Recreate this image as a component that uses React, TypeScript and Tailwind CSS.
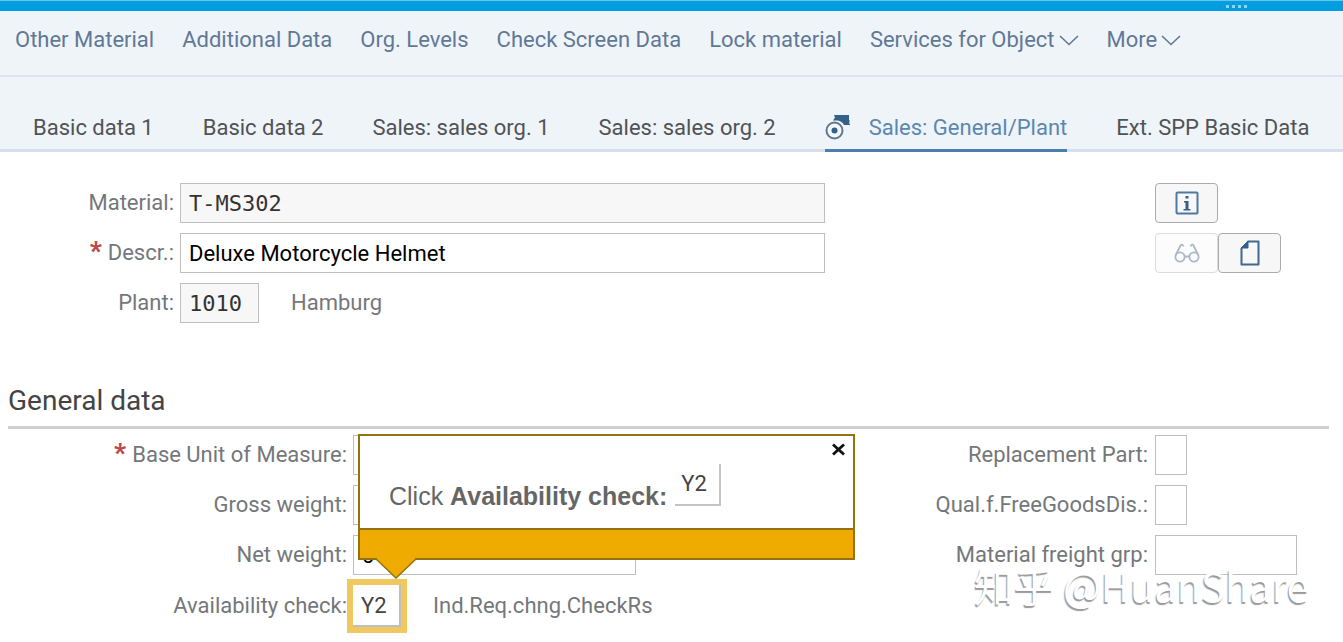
import React, { useState } from 'react';

type MenuItem = { label: string; dropdown?: boolean };

const menuItems: MenuItem[] = [
    { label: 'Other Material' },
    { label: 'Additional Data' },
    { label: 'Org. Levels' },
    { label: 'Check Screen Data' },
    { label: 'Lock material' },
    { label: 'Services for Object', dropdown: true },
    { label: 'More', dropdown: true },
];

const tabs = [
    'Basic data 1',
    'Basic data 2',
    'Sales: sales org. 1',
    'Sales: sales org. 2',
    'Sales: General/Plant',
    'Ext. SPP Basic Data',
];

const inputBase = 'h-10 border border-[#bfbfbf] px-2 text-[22px] outline-none';
const mono = "font-['DejaVu_Sans_Mono',monospace]";
const iconButton = 'flex h-10 w-[63px] items-center justify-center rounded-[4px] border border-[#ababab] bg-[#f7f7f7]';

const ChevronIcon = () => (
    <svg width="20" height="12" viewBox="0 0 20 12" fill="none" stroke="#617896" strokeWidth="1.6">
        <path d="M1 2L10 10.500L19 2" />
    </svg>
);

const TabIcon = () => (
    <svg width="26" height="26" viewBox="0 0 26 26" fill="none">
        <path d="M9 1H24V6L25 7L24 8L25 11H19C18 9 16 7 13 6.500L8 6.500L10 3.500Z" fill="#346187" />
        <circle cx="9.500" cy="16.500" r="8" stroke="#5f7890" strokeWidth="2" fill="#f4f8fb" />
        <circle cx="9.500" cy="16.500" r="3" fill="#346187" />
    </svg>
);

const InfoIcon = () => (
    <svg width="24" height="24" viewBox="0 0 24 24" fill="none">
        <rect x="1.500" y="1.500" width="21" height="21" rx="1" stroke="#4f7a9e" strokeWidth="2" />
        <path d="M10.500 5H13.500V7.500H10.500ZM9 10H13.500V18H15.500V19.500H8.500V18H10.500V11.500H9Z" fill="#346187" />
    </svg>
);

const GlassesIcon = () => (
    <svg width="26" height="20" viewBox="0 0 26 20" fill="none" stroke="#a9b9c8" strokeWidth="1.800">
        <circle cx="6" cy="14" r="4.600" />
        <circle cx="20" cy="14" r="4.600" />
        <path d="M10.500 13.500H15.500M1.800 12L6.500 2.500C7.200 1.300 8.600 1.300 9.500 3.500M24.200 12L19.500 2.500C18.800 1.300 17.400 1.300 16.500 3.500" />
    </svg>
);

const PageIcon = () => (
    <svg width="20" height="26" viewBox="0 0 20 26" fill="none">
        <path d="M7.500 1.500H18.500V24.500H1.500V8" stroke="#41698d" strokeWidth="2" strokeLinejoin="round" />
        <path d="M8 1V8H1Z" fill="#346187" stroke="#346187" strokeLinejoin="round" />
    </svg>
);

type LabelProps = { htmlFor: string; required?: boolean; className?: string; children: React.ReactNode };

const FieldLabel = ({ htmlFor, required, className, children }: LabelProps) => (
    <label htmlFor={htmlFor} className={`shrink-0 whitespace-nowrap text-right text-[#74777a] ${className ?? ''}`}>
        {required && <span className="mr-[6px] text-[26px] leading-5 font-black text-[#bb4a4a]">*</span>}
        {children}
    </label>
);

const Callout = ({ onClose }: { onClose: () => void }) => (
    <div className="absolute -top-px left-[358px] w-[497px] border-2 border-[#94720f] bg-white font-['Liberation_Sans',Arial,sans-serif]">
        <button
            type="button"
            aria-label="Close"
            onClick={onClose}
            className="absolute top-[7px] right-2 p-0"
        >
            <svg width="13" height="13" viewBox="0 0 13 13" stroke="#111" strokeWidth="2.800">
                <path d="M1 1.500L12 11.500M12 1.500L1 11.500" />
            </svg>
        </button>
        <div className="flex h-[92px] items-start pt-7 pl-[29px]">
            <p className="pt-4 text-[25px] leading-8 whitespace-nowrap text-[#666]">
                Click <strong>Availability check:</strong>
            </p>
            <span className="ml-2 flex h-[42px] w-[46px] items-center border-r-2 border-b-2 border-[#c4c4c4] pl-[6px] font-[Roboto,sans-serif] text-[22px] text-[#444]">
                Y2
            </span>
        </div>
        <div className="h-[30px] border-t-2 border-[#94720f] bg-[#f0ab00]" />
        <svg className="absolute top-[122px] left-4" width="40" height="21" viewBox="0 0 40 21">
            <path d="M1 0V2L20 20L39 2V0Z" fill="#f0ab00" />
            <path d="M0 1L20 20L40 1" fill="none" stroke="#94720f" strokeWidth="1.500" />
        </svg>
    </div>
);

const App: React.FC = () => {
    const [activeTab, setActiveTab] = useState('Sales: General/Plant');
    const [showCallout, setShowCallout] = useState(true);
    const [description, setDescription] = useState('Deluxe Motorcycle Helmet');

    return (
        <div className="relative min-h-screen overflow-hidden bg-white font-[Roboto,sans-serif] text-[22px] leading-7">
            {/* Shell bar */}
            <div className="flex h-[11px] justify-end gap-[3px] border-t border-[#6cc4ea] bg-[#009de0] pt-1 pr-24">
                {[0, 1, 2, 3].map((dot) => (
                    <span key={dot} className="size-[3px] bg-[#8fd3f2]" />
                ))}
            </div>

            <header className="bg-[#eff4f9]">
                <nav className="flex h-[66px] gap-7 border-b-2 border-[#dce5ef] pt-[15px] pl-[15px]">
                    {menuItems.map((item) => (
                        <button key={item.label} type="button" className="flex h-7 items-center gap-1 whitespace-nowrap text-[#617896]">
                            {item.label}
                            {item.dropdown && <ChevronIcon />}
                        </button>
                    ))}
                </nav>

                <div role="tablist" className="flex h-[75px] items-stretch gap-[49px] border-b-[3px] border-[#d5e0eb] pl-[33px]">
                    {tabs.map((tab) => (
                        <button
                            key={tab}
                            type="button"
                            role="tab"
                            aria-selected={activeTab === tab}
                            onClick={() => setActiveTab(tab)}
                            className={`-mb-[3px] flex items-start border-b-[3px] pt-[37px] whitespace-nowrap ${activeTab === tab ? 'border-[#4a7fad] text-[#5b88b0]' : 'border-transparent text-[#505356]'}`}
                        >
                            {tab === 'Sales: General/Plant' && <span className="mr-[18px]"><TabIcon /></span>}
                            {tab}
                        </button>
                    ))}
                </div>
            </header>

            <main>
                {/* Material header */}
                <div className="flex flex-col gap-[10px] pt-[31px]">
                    <div className="flex items-center">
                        <FieldLabel htmlFor="material" className="mr-[6px] w-[174px]">Material:</FieldLabel>
                        <input id="material" readOnly value="T-MS302" className={`${inputBase} ${mono} w-[48%] bg-[#f7f7f7] text-[#333]`} />
                        <div className="ml-auto w-[188px]">
                            <button type="button" aria-label="Information" className={iconButton}><InfoIcon /></button>
                        </div>
                    </div>
                    <div className="flex items-center">
                        <FieldLabel htmlFor="descr" required className="mr-[6px] w-[174px]">Descr.:</FieldLabel>
                        <input id="descr" value={description} onChange={(e) => setDescription(e.target.value)} className={`${inputBase} w-[48%] bg-white text-black`} />
                        <div className="ml-auto flex w-[188px]">
                            <button type="button" disabled aria-label="Display" className="flex h-10 w-[63px] items-center justify-center rounded-[4px] border border-[#dcdcdc] bg-[#fcfcfc]"><GlassesIcon /></button>
                            <button type="button" aria-label="Create" className={iconButton}><PageIcon /></button>
                        </div>
                    </div>
                    <div className="flex items-center">
                        <FieldLabel htmlFor="plant" className="mr-[6px] w-[174px]">Plant:</FieldLabel>
                        <input id="plant" readOnly value="1010" className={`${inputBase} ${mono} w-[79px] bg-[#f7f7f7] text-[#333]`} />
                        <span className="ml-8 text-[#74777a]">Hamburg</span>
                    </div>
                </div>

                {/* General data */}
                <h2 className="mt-[61px] mr-[14px] ml-2 border-b-[3px] border-[#cfcfcf] pb-2 text-[28px] leading-[34px] text-[#444]">General data</h2>

                <div className="relative mt-[6px] flex justify-between">
                    <div className="flex flex-col gap-[10px]">
                        <div className="flex items-center">
                            <FieldLabel htmlFor="unit" required className="mr-[6px] w-[347px]">Base Unit of Measure:</FieldLabel>
                            <input id="unit" className={`${inputBase} w-20`} />
                        </div>
                        <div className="flex items-center">
                            <FieldLabel htmlFor="gross" className="mr-[6px] w-[347px]">Gross weight:</FieldLabel>
                            <input id="gross" className={`${inputBase} w-[283px]`} />
                        </div>
                        <div className="flex items-center">
                            <FieldLabel htmlFor="net" className="mr-[6px] w-[347px]">Net weight:</FieldLabel>
                            <input id="net" defaultValue="0" className={`${inputBase} w-[283px]`} />
                        </div>
                        <div className="flex h-[42px] items-center">
                            <FieldLabel htmlFor="availability" className="mr-[6px] w-[347px]">Availability check:</FieldLabel>
                            <input id="availability" defaultValue="Y2" className="h-[42px] w-12 border-r-2 border-b-2 border-[#bfbfbf] pl-2 text-[22px] text-[#444] outline-[6px] outline-[#f0c860]" />
                            <span className="ml-8 text-[#74777a]">Ind.Req.chng.CheckRs</span>
                        </div>
                    </div>

                    <div className="flex flex-col gap-[10px]">
                        <div className="flex items-center">
                            <FieldLabel htmlFor="replacement" className="mr-[7px] w-[220px]">Replacement Part:</FieldLabel>
                            <div className="w-[188px]"><input id="replacement" className={`${inputBase} w-8`} /></div>
                        </div>
                        <div className="flex items-center">
                            <FieldLabel htmlFor="qual" className="mr-[7px] w-[220px]">Qual.f.FreeGoodsDis.:</FieldLabel>
                            <div className="w-[188px]"><input id="qual" className={`${inputBase} w-8`} /></div>
                        </div>
                        <div className="flex items-center">
                            <FieldLabel htmlFor="freight" className="mr-[7px] w-[220px]">Material freight grp:</FieldLabel>
                            <div className="w-[188px]"><input id="freight" className={`${inputBase} w-[142px]`} /></div>
                        </div>
                    </div>

                    {showCallout && <Callout onClose={() => setShowCallout(false)} />}

                    <p className="pointer-events-none absolute top-[130px] right-[34px] font-['Noto_Sans_CJK_SC',sans-serif] text-[40px] leading-10 whitespace-nowrap text-white [text-shadow:-1px_2px_1px_#999]">
                        知乎 @HuanShare
                    </p>
                </div>
            </main>
        </div>
    );
};

export default App;
